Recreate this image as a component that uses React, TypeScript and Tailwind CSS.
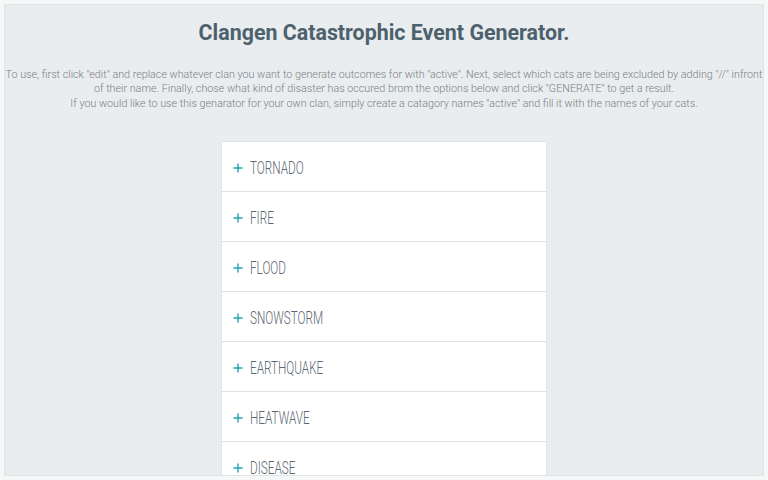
import React from "react";

const items = ["TORNADO", "FIRE", "FLOOD", "SNOWSTORM", "EARTHQUAKE", "HEATWAVE", "DISEASE"];

export default function App() {
  return (
    <div className="h-[480px] w-[768px] bg-[#f6f7f7] p-1 overflow-hidden">
      <div className="h-[472px] w-[760px] overflow-hidden border border-[#e1e4e6] bg-[#e9edf0]">
        <h1
          className="pt-[12px] text-center text-[21.4px] font-bold leading-[32px] text-[#4d616c]"
          style={{ fontFamily: "Roboto, sans-serif" }}
        >
          Clangen Catastrophic Event Generator.
        </h1>
        <p
          className="mt-[19px] text-center text-[10.75px] font-light leading-[14.4px] text-[#7b7f83]"
          style={{ fontFamily: "Roboto, sans-serif" }}
        >
          To use, first click "edit" and replace whatever clan you want to generate outcomes for with "active". Next, select which cats are being excluded by adding "//" infront of their name. Finally, chose what kind of disaster has occured brom the options below and click "GENERATE" to get a result.
          <br />
          If you would like to use this genarator for your own clan, simply create a catagory names "active" and fill it with the names of your cats.
        </p>
        <div className="mt-[30px] ml-[216px] w-[326px] overflow-hidden rounded-[3px] border border-[#e0e4e7] bg-white">
          {items.map((it, i) => (
            <div
              key={it}
              className={`flex items-center pl-[11px] pt-[4px] ${i > 0 ? "h-[50px] border-t border-[#dfe2e5]" : "h-[49px]"}`}
            >
              <svg width="10" height="10" viewBox="0 0 10 10" className="mt-[-2px]">
                <path d="M5 0.5V9.5M0.5 5H9.5" stroke="#22a3b4" strokeWidth="1.4" />
              </svg>
              <span
                className="ml-[7px] inline-block origin-left scale-x-[0.66] text-[17.8px] font-light text-[#5d6771]"
                style={{ fontFamily: "Roboto, sans-serif" }}
              >
                {it}
              </span>
            </div>
          ))}
        </div>
      </div>
    </div>
  );
}
